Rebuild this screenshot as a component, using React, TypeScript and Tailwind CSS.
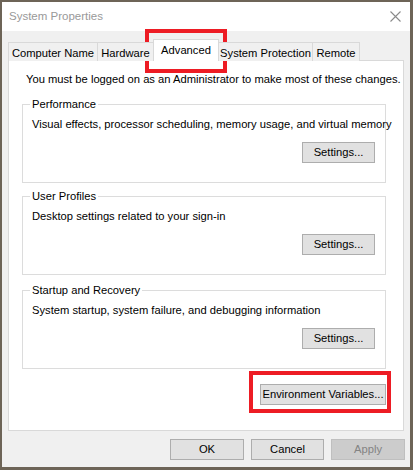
import React from 'react';

const font = "font-['Liberation_Sans',Arial,sans-serif]";

function WinButton({ label, className = '', disabled = false }: { label: string; className?: string; disabled?: boolean }) {
  return (
    <div
      className={`flex h-[21px] items-center justify-center whitespace-nowrap border text-[11.2px] leading-none ${
        disabled ? 'border-[#bfbfbf] bg-[#cccccc] text-[#838383]' : 'border-[#adadad] bg-[#e1e1e1] text-black'
      } ${className}`}
    >
      {label}
    </div>
  );
}

function GroupBox({ title, desc, className = '' }: { title: string; desc: string; className?: string }) {
  return (
    <div className={`relative h-[79px] w-[364px] border border-[#dcdcdc] ${className}`}>
      <span className="absolute left-[7px] top-[-9px] whitespace-nowrap bg-white px-[2px] text-[11.2px] leading-[16px]">{title}</span>
      <div className="whitespace-nowrap pl-[9px] pt-[11px] text-[11.2px] leading-[16px]">{desc}</div>
      <div className="flex justify-end pr-[10px] pt-[10px]">
        <WinButton label="Settings..." className="w-[73px]" />
      </div>
    </div>
  );
}

const tabs = [
  { label: 'Computer Name', w: 'w-[90px]' },
  { label: 'Hardware', w: 'w-[57px]' },
  { label: 'Advanced', w: 'w-[66px]', active: true },
  { label: 'System Protection', w: 'w-[95px]' },
  { label: 'Remote', w: 'w-[48px]' },
];

export default function App() {
  return (
    <div className={`relative h-[470px] w-[413px] bg-[#6d6457] pl-[2px] pr-[3px] pt-[2px] pb-[3px] ${font} text-black`}>
      <div className="flex h-full flex-col bg-[#f0f0f0]">
        {/* title bar */}
        <div className="flex h-[29px] shrink-0 items-center justify-between bg-white pl-[7px] pr-[9px]">
          <span className="whitespace-nowrap text-[11.5px] text-[#999999]">System Properties</span>
          <svg width="11" height="11" viewBox="0 0 11 11">
            <path d="M0.5 0.5 L10.5 10.5 M10.5 0.5 L0.5 10.5" stroke="#8a8a8a" strokeWidth="1.1" />
          </svg>
        </div>

        {/* tabs */}
        <div className="relative z-10 mt-[8px] flex h-[22px] items-end pl-[6px]">
          {tabs.map((t) =>
            t.active ? (
              <div
                key={t.label}
                className={`-ml-px flex h-[22px] ${t.w} justify-center whitespace-nowrap border border-b-0 border-[#d9d9d9] bg-white pt-[2px] text-[11.2px] leading-[16px]`}
              >
                {t.label}
              </div>
            ) : (
              <div
                key={t.label}
                className={`-ml-px flex h-[19px] ${t.w} justify-center whitespace-nowrap border border-b-0 border-[#d9d9d9] bg-[#f0f0f0] pt-[2px] text-[11.2px] leading-[16px] first:ml-0`}
              >
                {t.label}
              </div>
            )
          )}
        </div>

        {/* panel */}
        <div className="mx-[6px] -mt-px h-[371px] border border-[#d9d9d9] bg-white">
          <div className="whitespace-nowrap pl-[17px] pt-[10px] text-[11.2px] leading-[16px]">
            You must be logged on as an Administrator to make most of these changes.
          </div>
          <div className="flex flex-col pl-[13px] pt-[17px]">
            <GroupBox title="Performance" desc="Visual effects, processor scheduling, memory usage, and virtual memory" />
            <GroupBox
              className="mt-[13px] h-[78px]"
              title="User Profiles"
              desc="Desktop settings related to your sign-in"
            />
            <GroupBox
              className="mt-[15px] h-[78px]"
              title="Startup and Recovery"
              desc="System startup, system failure, and debugging information"
            />
            <div className="flex w-[364px] justify-end pt-[15px]">
              <WinButton label="Environment Variables..." className="w-[126px]" />
            </div>
          </div>
        </div>

        {/* bottom buttons */}
        <div className="flex justify-end gap-[7px] pr-[5px] pt-[8px]">
          <WinButton label="OK" className="w-[74px]" />
          <WinButton label="Cancel" className="w-[73px]" />
          <WinButton label="Apply" className="w-[74px]" disabled />
        </div>
      </div>

      {/* red highlight boxes (annotation overlay) */}
      <div className="pointer-events-none absolute left-[145px] top-[29px] h-[44px] w-[82px] border-[4px] border-[#ed1c24]" />
      <div className="pointer-events-none absolute left-[249px] top-[371px] h-[42px] w-[142px] border-[4px] border-[#ed1c24]" />
    </div>
  );
}
